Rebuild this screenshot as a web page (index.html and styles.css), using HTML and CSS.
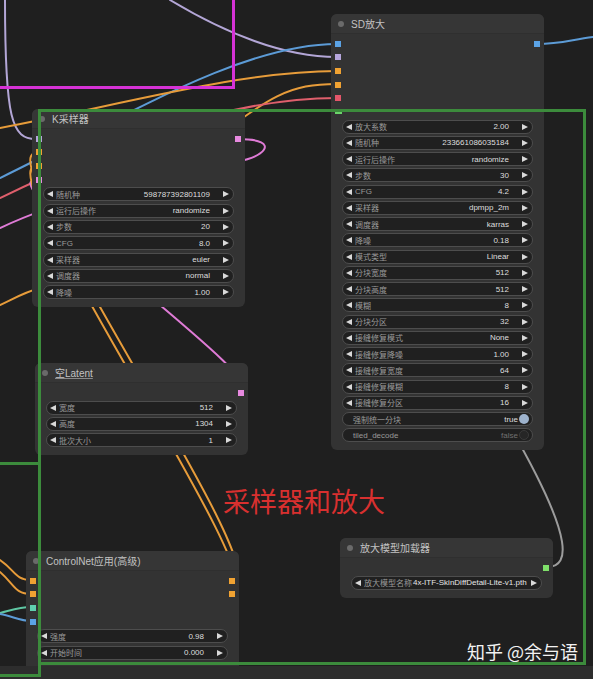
FILE: index.html
```html
<!DOCTYPE html>
<html lang="zh">
<head>
<meta charset="utf-8">
<title>ComfyUI - 采样器和放大</title>
<link rel="stylesheet" href="styles.css">
</head>
<body>
<div class="canvas">
  <svg class="wires" width="593" height="679" viewBox="0 0 593 679">
    <g fill="none" stroke-width="2" stroke-linecap="round">
      <path class="wl" d="M5,0 C5,120 12,139 36,139"/>
      <path class="wl" d="M170,0 C220,30 280,57 337,57"/>
      <path class="wb" d="M0,178 C120,120 240,44 337,44"/>
      <path class="wo" d="M0,128 C120,105 240,71 337,71"/>
      <path class="wo" d="M200,150 C270,95 290,84 337,84"/>
      <path class="wr" d="M0,198 C100,150 220,98 337,98"/>
      <path class="wp" d="M238,139 C285,139 262,160 232,162 C150,175 60,200 0,228"/>
      <path class="wp" d="M240,393 C290,393 -14,180 36,180"/>
      <path class="wo" d="M232,580 C282,580 -14,153 36,153"/>
      <path class="wo" d="M232,594 C282,594 -14,166 36,166"/>
      <path class="wo" d="M0,305 C15,298 25,292 40,288"/>
      <path class="wo" d="M0,560 C15,570 15,580 31,580"/>
      <path class="wo" d="M0,572 C15,585 15,594 31,594"/>
      <path class="wt" d="M0,613 C12,610 20,607 31,607"/>
      <path class="wb" d="M0,614 C12,616 20,621 31,621"/>
      <path class="wg" d="M547,567 C640,567 287,113 337,113"/>
      <path class="wb" d="M537,44 C560,44 570,40 593,37"/>
    </g>
  </svg>

  <div class="node n-k">
    <div class="title"><span class="dot"></span>K采样器</div>
    <div class="slots">
      <div class="slot-row"><span class="in c-lav"></span><span class="out c-pink"></span></div>
      <div class="slot-row"><span class="in c-or"></span></div>
      <div class="slot-row"><span class="in c-or"></span></div>
      <div class="slot-row"><span class="in c-pink"></span></div>
    </div>
    <div class="widgets">
      <div class="w"><span class="al"></span><span class="lbl">随机种</span><span class="val">598787392801109</span><span class="ar"></span></div>
      <div class="w"><span class="al"></span><span class="lbl">运行后操作</span><span class="val">randomize</span><span class="ar"></span></div>
      <div class="w"><span class="al"></span><span class="lbl">步数</span><span class="val">20</span><span class="ar"></span></div>
      <div class="w"><span class="al"></span><span class="lbl">CFG</span><span class="val">8.0</span><span class="ar"></span></div>
      <div class="w"><span class="al"></span><span class="lbl">采样器</span><span class="val">euler</span><span class="ar"></span></div>
      <div class="w"><span class="al"></span><span class="lbl">调度器</span><span class="val">normal</span><span class="ar"></span></div>
      <div class="w"><span class="al"></span><span class="lbl">降噪</span><span class="val">1.00</span><span class="ar"></span></div>
    </div>
  </div>

  <div class="node n-sd">
    <div class="title"><span class="dot"></span>SD放大</div>
    <div class="slots">
      <div class="slot-row"><span class="in c-blue"></span><span class="out c-blue"></span></div>
      <div class="slot-row"><span class="in c-lav"></span></div>
      <div class="slot-row"><span class="in c-or"></span></div>
      <div class="slot-row"><span class="in c-or"></span></div>
      <div class="slot-row"><span class="in c-red"></span></div>
      <div class="slot-row"><span class="in c-green small"></span></div>
    </div>
    <div class="widgets">
      <div class="w"><span class="al"></span><span class="lbl">放大系数</span><span class="val">2.00</span><span class="ar"></span></div>
      <div class="w"><span class="al"></span><span class="lbl">随机种</span><span class="val">233661086035184</span><span class="ar"></span></div>
      <div class="w"><span class="al"></span><span class="lbl">运行后操作</span><span class="val">randomize</span><span class="ar"></span></div>
      <div class="w"><span class="al"></span><span class="lbl">步数</span><span class="val">30</span><span class="ar"></span></div>
      <div class="w"><span class="al"></span><span class="lbl">CFG</span><span class="val">4.2</span><span class="ar"></span></div>
      <div class="w"><span class="al"></span><span class="lbl">采样器</span><span class="val">dpmpp_2m</span><span class="ar"></span></div>
      <div class="w"><span class="al"></span><span class="lbl">调度器</span><span class="val">karras</span><span class="ar"></span></div>
      <div class="w"><span class="al"></span><span class="lbl">降噪</span><span class="val">0.18</span><span class="ar"></span></div>
      <div class="w"><span class="al"></span><span class="lbl">模式类型</span><span class="val">Linear</span><span class="ar"></span></div>
      <div class="w"><span class="al"></span><span class="lbl">分块宽度</span><span class="val">512</span><span class="ar"></span></div>
      <div class="w"><span class="al"></span><span class="lbl">分块高度</span><span class="val">512</span><span class="ar"></span></div>
      <div class="w"><span class="al"></span><span class="lbl">模糊</span><span class="val">8</span><span class="ar"></span></div>
      <div class="w"><span class="al"></span><span class="lbl">分块分区</span><span class="val">32</span><span class="ar"></span></div>
      <div class="w"><span class="al"></span><span class="lbl">接缝修复模式</span><span class="val">None</span><span class="ar"></span></div>
      <div class="w"><span class="al"></span><span class="lbl">接缝修复降噪</span><span class="val">1.00</span><span class="ar"></span></div>
      <div class="w"><span class="al"></span><span class="lbl">接缝修复宽度</span><span class="val">64</span><span class="ar"></span></div>
      <div class="w"><span class="al"></span><span class="lbl">接缝修复模糊</span><span class="val">8</span><span class="ar"></span></div>
      <div class="w"><span class="al"></span><span class="lbl">接缝修复分区</span><span class="val">16</span><span class="ar"></span></div>
      <div class="w tg"><span class="lbl">强制统一分块</span><span class="val">true</span><span class="knob on"></span></div>
      <div class="w tg"><span class="lbl">tiled_decode</span><span class="val off">false</span><span class="knob off"></span></div>
    </div>
  </div>

  <div class="node n-lat">
    <div class="title"><span class="dot"></span><span class="ul">空Latent</span></div>
    <div class="slots">
      <div class="slot-row"><span class="out c-pink"></span></div>
    </div>
    <div class="widgets">
      <div class="w"><span class="al"></span><span class="lbl">宽度</span><span class="val">512</span><span class="ar"></span></div>
      <div class="w"><span class="al"></span><span class="lbl">高度</span><span class="val">1304</span><span class="ar"></span></div>
      <div class="w"><span class="al"></span><span class="lbl">批次大小</span><span class="val">1</span><span class="ar"></span></div>
    </div>
  </div>

  <div class="node n-cn">
    <div class="title"><span class="dot"></span>ControlNet应用(高级)</div>
    <div class="slots">
      <div class="slot-row"><span class="in c-or"></span><span class="out c-or"></span></div>
      <div class="slot-row"><span class="in c-or"></span><span class="out c-or"></span></div>
      <div class="slot-row"><span class="in c-teal"></span></div>
      <div class="slot-row"><span class="in c-blue"></span></div>
    </div>
    <div class="widgets">
      <div class="w"><span class="al"></span><span class="lbl">强度</span><span class="val">0.98</span><span class="ar"></span></div>
      <div class="w"><span class="al"></span><span class="lbl">开始时间</span><span class="val">0.000</span><span class="ar"></span></div>
    </div>
  </div>

  <div class="node n-up">
    <div class="title"><span class="dot"></span>放大模型加载器</div>
    <div class="slots">
      <div class="slot-row"><span class="out c-lime"></span></div>
    </div>
    <div class="widgets">
      <div class="w"><span class="al"></span><span class="lbl">放大模型名称</span><span class="val model">4x-ITF-SkinDiffDetail-Lite-v1.pth</span><span class="ar"></span></div>
    </div>
  </div>

  <div class="bottombar"></div>

  <div class="group g-mag"></div>
  <div class="group g-green"></div>
  <div class="group g-green2"></div>

  <div class="note">采样器和放大</div>
  <div class="watermark">知乎 @余与语</div>
</div>
</body>
</html>
```

FILE: styles.css
```css
* { box-sizing: border-box; }

body {
  margin: 0;
  background: #202020;
  font-family: "Liberation Sans", "Noto Sans CJK SC", sans-serif;
}

.canvas {
  position: relative;
  width: 593px;
  height: 679px;
  overflow: hidden;
  background: #1f1f1f;
}

.wires { position: absolute; left: 0; top: 0; }
.wl { stroke: #b3a6d6; }
.wb { stroke: #5c9bd6; }
.wo { stroke: #e79c3a; }
.wr { stroke: #df5f6c; }
.wp { stroke: #df7bd6; }
.wt { stroke: #5fc6a3; }
.wg { stroke: #9c9c9c; }

/* nodes */
.node {
  position: absolute;
  width: 213px;
  background: #333333;
  border-radius: 6px;
  padding-bottom: 8px;
}
.n-k { left: 32px; top: 109px; }
.n-sd { left: 331px; top: 14px; }
.n-lat { left: 35px; top: 363px; }
.n-cn { left: 26px; top: 551px; padding-bottom: 14px; }
.n-up { left: 340px; top: 538px; }

.title {
  height: 20px;
  display: flex;
  align-items: center;
  gap: 7px;
  padding-left: 7px;
  font-size: 10px;
  color: #c2c2c2;
  background: #363636;
  border-radius: 6px 6px 0 0;
  border-bottom: 1px solid #2f2f2f;
  white-space: nowrap;
}
.dot {
  width: 6px;
  height: 6px;
  border-radius: 50%;
  background: #6a6a6a;
  flex: none;
}
.ul { text-decoration: underline; text-decoration-color: #8a8a8a; }

.slots { padding: 3px 4px 0 4px; }
.slot-row { height: 13.6px; display: flex; align-items: center; }
.in, .out { width: 6px; height: 6px; flex: none; }
.out { margin-left: auto; }
.small { height: 4px; width: 7px; }
.c-lav { background: #b6a6dc; }
.c-pink { background: #e88ae0; }
.c-or { background: #f0a232; }
.c-blue { background: #5ba3e6; }
.c-red { background: #e4566a; }
.c-green { background: #6ad46a; }
.c-lime { background: #7fe06a; }
.c-teal { background: #5fd0ae; }

.widgets {
  display: flex;
  flex-direction: column;
  gap: 2.25px;
  padding: 1px 11px 0;
}
.n-k .widgets { gap: 2.3px; }
.w {
  height: 14px;
  border-radius: 7px;
  background: #202020;
  border: 1px solid #4d4d4d;
  display: flex;
  align-items: center;
  font-size: 8px;
  white-space: nowrap;
}
.al {
  flex: none;
  border-top: 3.5px solid transparent;
  border-bottom: 3.5px solid transparent;
  border-right: 6px solid #d9d9d9;
  margin-left: 3px;
}
.ar {
  flex: none;
  border-top: 3.5px solid transparent;
  border-bottom: 3.5px solid transparent;
  border-left: 6px solid #d9d9d9;
  margin-right: 4px;
}
.lbl { color: #9a9a9a; margin-left: 3px; }
.val { color: #dedede; margin-left: auto; margin-right: 13px; }
.val.model { margin-left: 1px; margin-right: auto; color: #e6e6e6; }

.tg .lbl { margin-left: 10px; }
.tg .val { margin-right: 1px; }
.val.off { color: #707070; }
.knob {
  width: 10px;
  height: 10px;
  border-radius: 50%;
  margin-right: 3px;
  flex: none;
}
.knob.on { background: #9db2cc; }
.knob.off { background: #262626; border: 1px solid #3a3a3a; }

/* bottom band */
.bottombar {
  position: absolute;
  left: 0;
  top: 666px;
  width: 593px;
  height: 13px;
  background: #2d2d2d;
}

/* groups drawn over the nodes */
.group { position: absolute; border: 3px solid; pointer-events: none; }
.g-mag { left: -10px; top: -10px; width: 245px; height: 99px; border-color: #d632d6; }
.g-green { left: 38px; top: 109px; width: 548px; height: 556px; border-color: #3c8b3c; }
.g-green2 { left: -10px; top: 462px; width: 51px; height: 215px; border-color: #3c8b3c; }

.note {
  position: absolute;
  left: 223px;
  top: 487px;
  font-family: "Noto Sans CJK SC", sans-serif;
  font-size: 27px;
  line-height: 27px;
  color: #d8302f;
  white-space: nowrap;
}

.watermark {
  position: absolute;
  left: 467px;
  top: 641px;
  font-family: "Noto Sans CJK SC", sans-serif;
  font-size: 18px;
  line-height: 20px;
  color: #f2f2f2;
  white-space: nowrap;
}
```
